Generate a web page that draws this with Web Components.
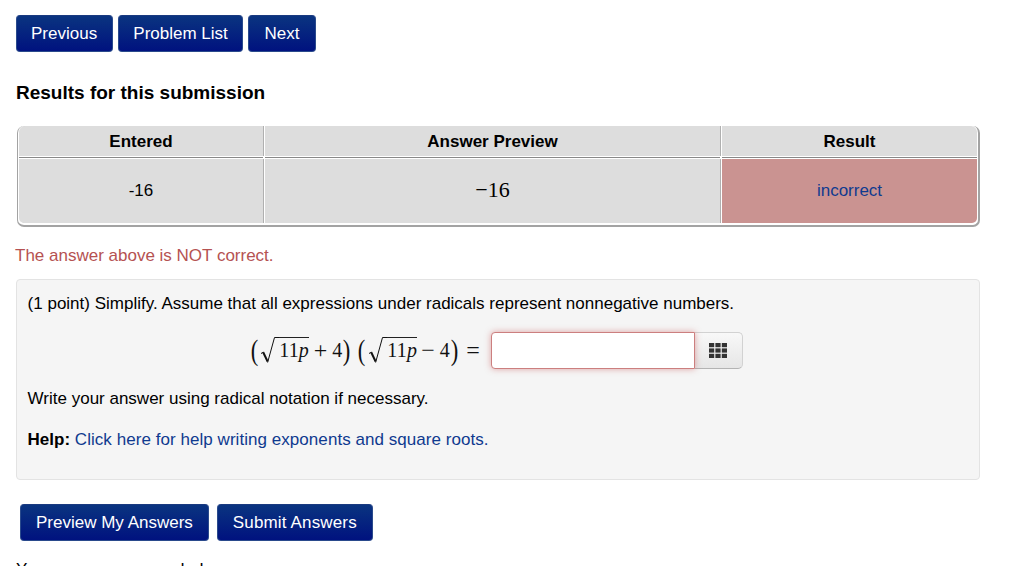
<!DOCTYPE html>
<html><head><meta charset="utf-8"><style>
html,body{margin:0;height:566px;overflow:hidden;background:#fff}
body{font:17px/20px "Liberation Sans",Arial,sans-serif;color:#000}
</style></head><body>
<ww-page>
  <ww-nav><ww-button style="padding:0 15px 0 14px">Previous</ww-button><ww-button style="padding:0 14.2px">Problem List</ww-button><ww-button style="padding:0 15.5px">Next</ww-button></ww-nav>
  <ww-results></ww-results>
  <ww-problem></ww-problem>
  <ww-submit><ww-button style="padding:0 15px">Preview My Answers</ww-button><ww-button style="padding:0 15px;letter-spacing:.15px">Submit Answers</ww-button></ww-submit>
  <ww-foot>Your score was recorded.</ww-foot>
</ww-page>
<script>
function def(name,html){customElements.define(name,class extends HTMLElement{constructor(){super();this.attachShadow({mode:'open'}).innerHTML=html;}});}
def('ww-page',`<style>:host{display:block;padding:15px 0 0 16px;width:964px}</style><slot></slot>`);
def('ww-button',`<style>:host{display:inline-block;box-sizing:border-box;height:37px;padding:0 14.5px;line-height:35px;color:#fff;font-size:17px;border-radius:4px;border:1px solid #2a4a8c;border-top-color:#1a3a80;background:linear-gradient(#0a3480,#00127f);white-space:nowrap}</style><slot></slot>`);
def('ww-nav',`<style>:host{display:flex;gap:5px}</style><slot></slot>`);
def('ww-results',`<style>
:host{display:block;margin-top:31px}
h2{font-size:19px;line-height:20px;font-weight:700;margin:0 0 23px}
.t{margin-left:1px;width:963px;box-sizing:border-box;height:101px;border:solid #a3a3a3;border-width:0 2px 2px 1px;border-radius:7px;padding:0 1px 2px 1px;display:grid;grid-template-columns:244px 455px 1fr;grid-template-rows:30px 1fr;gap:2px;background:#fff}
.c{background:#ddd;display:flex;align-items:center;justify-content:center;box-shadow:1px 0 0 #b0b0b0}
.c.h{font-weight:700;padding-top:2px;box-sizing:border-box;box-shadow:1px 0 0 #b0b0b0,0 1px 0 #fff,0 2px 0 #888}
.l{box-shadow:none}
.c.h.l{box-shadow:0 1px 0 #fff,0 2px 0 #888}
.r1{margin-top:1px}
.r{background:#ca9391;color:#0f3a8f}
.m{font:22px "Liberation Serif",serif;padding-bottom:2px;box-sizing:border-box}
.first-h{border-top-left-radius:6px}.last-h{border-top-right-radius:6px}
.first-b{border-bottom-left-radius:5px}.last-b{border-bottom-right-radius:5px}
p{margin:19px 0 0 -1px;color:#b55252;line-height:20px}
</style><h2>Results for this submission</h2>
<div class="t"><div class="c h first-h">Entered</div><div class="c h">Answer Preview</div><div class="c h l last-h">Result</div>
<div class="c r1 first-b">-16</div><div class="c m r1">−16</div><div class="c l r r1 last-b">incorrect</div></div>
<p>The answer above is NOT correct.</p>`);
def('ww-radical',`<style>:host{display:inline-flex;align-items:flex-start;height:28px}
svg{width:19px;height:28px;display:block;flex:none}
span{border-top:1px solid #222;display:block;line-height:24px;margin-top:1px;width:30px;letter-spacing:.2px}
i{font-style:italic}</style>
<svg viewBox="0 0 19 28"><path d="M1 17.5l2.4-1.3" fill="none" stroke="#111" stroke-width="1"/><path d="M3.2 16.2l4.4 9.3" fill="none" stroke="#111" stroke-width="2"/><path d="M7.6 26.5L14.5 1.5H19" fill="none" stroke="#111" stroke-width="1"/></svg><span><slot></slot></span>`);
def('ww-formula',`<style>:host{display:inline-flex;align-items:center;font:20px/28px "Liberation Serif",serif;color:#111;white-space:nowrap;margin-top:-2px}
.p{font-size:29px;line-height:28px;width:7px;text-align:center;display:flex;justify-content:center;transform:scaleX(.78)}
.o{font-size:24px;display:block}
</style><span class="p" style="margin-right:2px">(</span><ww-radical>11<i>p</i></ww-radical><span class="o" style="margin:0 5px 0 4.5px">+</span><span>4</span><span class="p" style="margin-left:1px">)</span><span style="width:8px"></span><span class="p" style="margin-right:3px">(</span><ww-radical>11<i>p</i></ww-radical><span class="o" style="margin:0 5px 0 4px">−</span><span>4</span><span class="p" style="margin-left:1px">)</span><span class="o" style="margin-left:8.5px">=</span>`);
def('ww-answer',`<style>:host{display:inline-flex;height:37px;margin-left:11px}
.i{width:204px;box-sizing:border-box;background:#fff;border:1px solid #cc7f7f;border-radius:4px 0 0 4px;box-shadow:0 0 6px rgba(200,80,80,.5);position:relative}
.b{width:48px;box-sizing:border-box;border:1px solid #d2d2d2;border-left:0;border-bottom-color:#b3b3b3;border-radius:0 5px 5px 0;background:linear-gradient(#f8f8f8,#e6e6e6);display:flex;align-items:center;justify-content:center}
svg{width:18px;height:15px;display:block}</style>
<div class="i"></div><div class="b"><svg viewBox="0 0 18 15" fill="#333"><rect x="0" y="0" width="5.2" height="4.2"/><rect x="6.4" y="0" width="5.2" height="4.2"/><rect x="12.8" y="0" width="5.2" height="4.2"/><rect x="0" y="5.4" width="5.2" height="4.2"/><rect x="6.4" y="5.4" width="5.2" height="4.2"/><rect x="12.8" y="5.4" width="5.2" height="4.2"/><rect x="0" y="10.8" width="5.2" height="4.2"/><rect x="6.4" y="10.8" width="5.2" height="4.2"/><rect x="12.8" y="10.8" width="5.2" height="4.2"/></svg></div>`);
def('ww-problem',`<style>:host{display:block;box-sizing:border-box;margin-top:13px;height:201px;width:964px;background:#f5f5f5;border:1px solid #e3e3e3;border-radius:4px;padding:14px 10.6px}
p{margin:0}
.eq{display:flex;align-items:center;justify-content:center;height:37px;margin-top:18px;padding-right:2px}
a{color:#0f3a8f;text-decoration:none;letter-spacing:.05px}
</style><p>(1 point) Simplify. Assume that all expressions under radicals represent nonnegative numbers.</p>
<div class="eq"><ww-formula></ww-formula><ww-answer></ww-answer></div>
<p style="margin-top:20px">Write your answer using radical notation if necessary.</p>
<p style="margin-top:21px"><b>Help:</b> <a>Click here for help writing exponents and square roots.</a></p>`);
def('ww-submit',`<style>:host{display:flex;gap:8px;margin:24px 0 0 4px}</style><slot></slot>`);
def('ww-foot',`<style>:host{display:block;margin-top:19px;white-space:nowrap}</style><slot></slot>`);
</script></body></html>
